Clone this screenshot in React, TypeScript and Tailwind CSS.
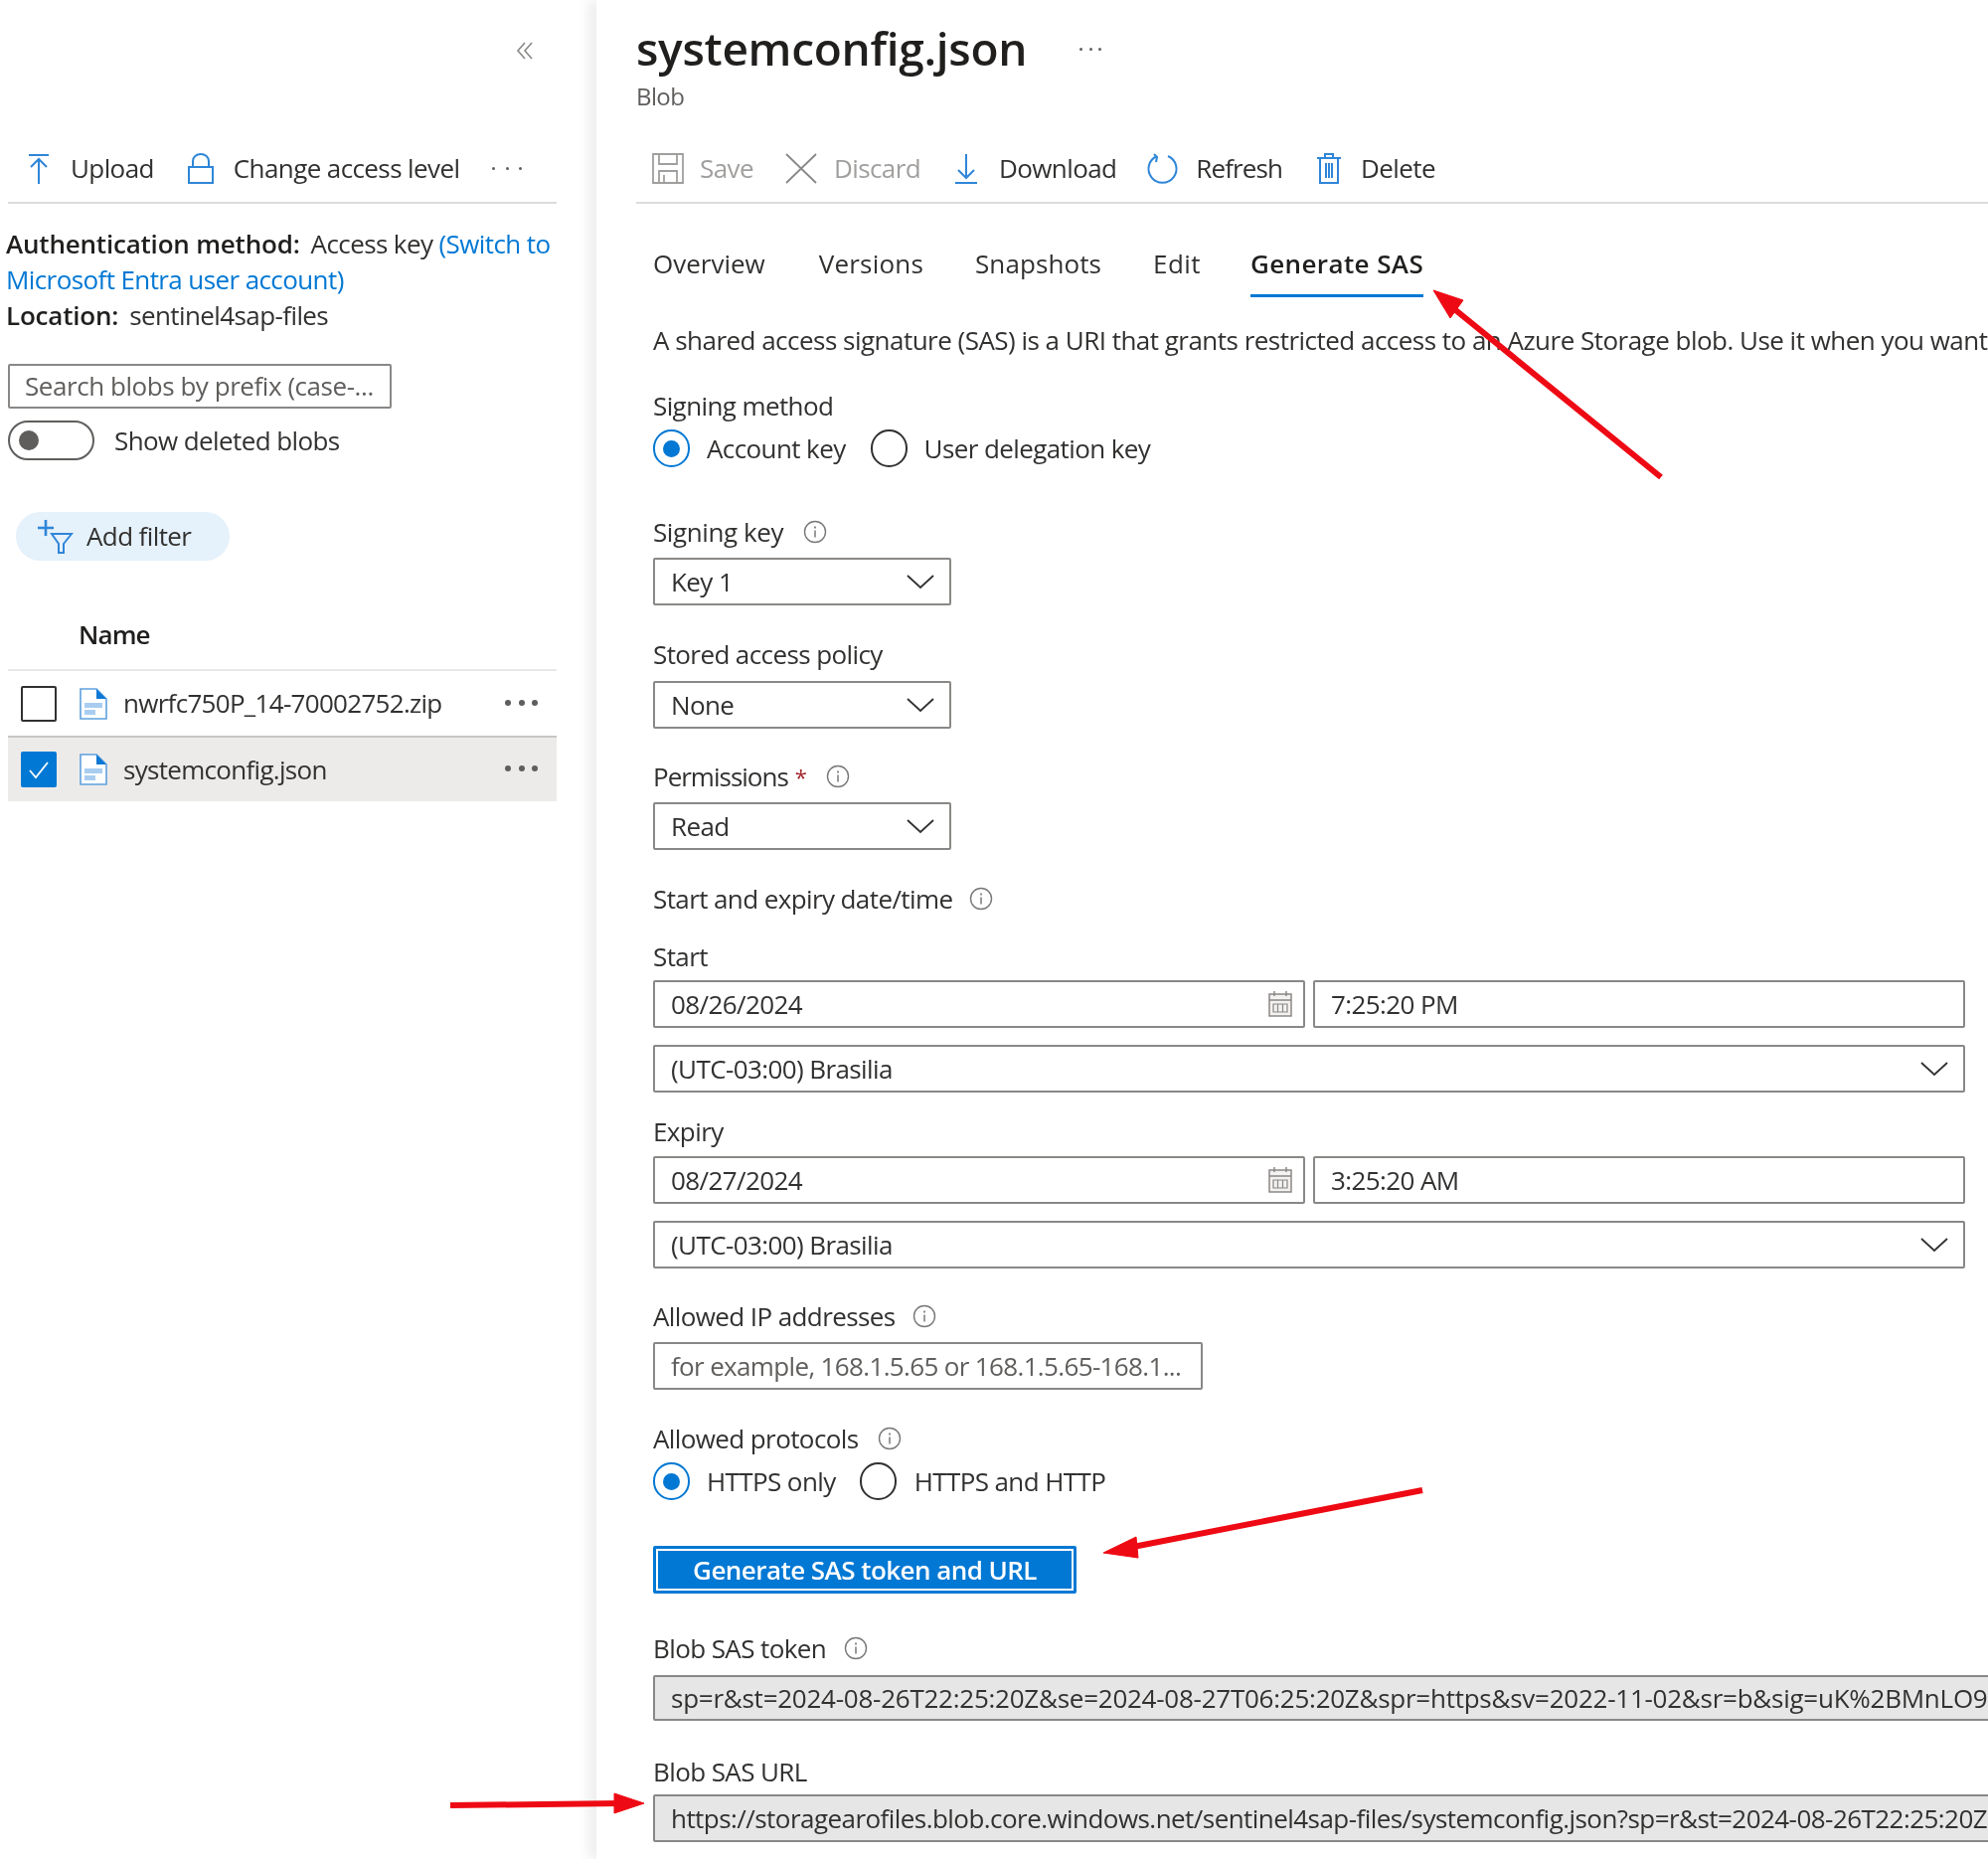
import React from "react";

const Info = ({ className = "" }: { className?: string }) => (
  <svg viewBox="0 0 24 24" className={`h-[24px] w-[24px] ${className}`} fill="none" stroke="#79777a" strokeWidth="1.4">
    <circle cx="12" cy="12" r="10.5" />
    <path d="M12 10.5v7" strokeWidth="1.5" />
    <path d="M12 6.5v2" strokeWidth="1.7" />
  </svg>
);

const Chevron = () => (
  <svg viewBox="0 0 28 16" className="h-[16px] w-[28px]" fill="none" stroke="#323130" strokeWidth="1.8">
    <path d="M1 2l13 12L27 2" />
  </svg>
);

const Radio = ({ on }: { on?: boolean }) => (
  <span className={`flex h-[38px] w-[37px] shrink-0 items-center justify-center rounded-full border-2 ${on ? "border-[#0078d4]" : "border-[#323130]"}`}>
    {on ? <span className="h-[17px] w-[17px] rounded-full bg-[#0078d4]" /> : null}
  </span>
);

const Calendar = () => (
  <svg viewBox="0 0 24 26" className="h-[26px] w-[24px]" fill="none" stroke="#8a8886" strokeWidth="1.5">
    <rect x="1" y="3" width="22" height="22" fill="#f3f2f1" />
    <path d="M1 9h22M6 0v5M18 0v5" />
    <path d="M5 13h14v8H5zM9.5 13v8M14.5 13v8" strokeWidth="1.2" />
  </svg>
);

const FileIcon = () => (
  <svg viewBox="0 0 28 32" className="h-[32px] w-[28px]">
    <path d="M1 1h16l10 10v20H1z" fill="#fff" stroke="#5ea0de" strokeWidth="1.6" />
    <path d="M17 1v10h10z" fill="#0f78d4" />
    <path d="M5 15h18v5H5zM5 22h11v5H5z" fill="#a9cdf0" />
  </svg>
);

const Dots = () => (
  <span className="mb-[2px] flex w-[33px] justify-between">
    <span className="h-[6px] w-[6px] rounded-full bg-[#605e5c]" />
    <span className="h-[6px] w-[6px] rounded-full bg-[#605e5c]" />
    <span className="h-[6px] w-[6px] rounded-full bg-[#605e5c]" />
  </span>
);

const TinyDots = ({ className = "" }: { className?: string }) => (
  <span className={`flex justify-between ${className}`}>
    <span className="h-[3px] w-[3px] rounded-full bg-[#605e5c]" />
    <span className="h-[3px] w-[3px] rounded-full bg-[#605e5c]" />
    <span className="h-[3px] w-[3px] rounded-full bg-[#605e5c]" />
  </span>
);

const Select = ({ value }: { value: string }) => (
  <span className="flex h-full w-full items-center justify-between pl-[16px] pr-[15px]">
    <span>{value}</span>
    <Chevron />
  </span>
);

export default function App() {
  return (
    <div className="relative flex h-[1870px] w-[2000px] overflow-hidden bg-white font-['Open_Sans',sans-serif] text-[26px] tracking-[-0.6px] text-[#323130] blur-[0.5px]">
      <aside className="w-[600px] shrink-0 pl-[8px] pr-[40px]">
        <div className="flex h-[102px] items-center justify-end pr-[23px]">
          <svg viewBox="0 0 18 20" className="h-[20px] w-[18px]" fill="none" stroke="#8a8886" strokeWidth="1.6">
            <path d="M9 2L2 10l7 8M16 2l-7 8 7 8" />
          </svg>
        </div>
        <div className="flex h-[103px] items-center border-b-2 border-[#dddcda] pt-[34px]">
          <svg viewBox="0 0 22 31" className="ml-[20px] h-[31px] w-[22px]" fill="none" stroke="#2f86d8" strokeWidth="2">
            <path d="M1 2h20M11 31V7M3 14l8-8 8 8" />
          </svg>
          <span className="ml-[21px]">Upload</span>
          <svg viewBox="0 0 26 31" className="ml-[34px] h-[31px] w-[26px]" fill="none" stroke="#2f86d8" strokeWidth="2">
            <rect x="1" y="14" width="24" height="16" />
            <path d="M5 14V8a8 7 0 0 1 16 0v6" />
          </svg>
          <span className="ml-[20px]">Change access level</span>
          <TinyDots className="ml-[33px] w-[30px]" />
        </div>
        <div className="-ml-[2px] mt-[22px] w-[560px] leading-[36px]">
          <div className="whitespace-nowrap">
            <span className="font-semibold tracking-[-0.2px] text-[#201f1e]">Authentication method:</span>
            <span className="ml-[11px]">Access key </span>
            <span className="text-[#0078d4]">(Switch to</span>
          </div>
          <div className="text-[#0078d4]">Microsoft Entra user account)</div>
          <div>
            <span className="font-semibold tracking-[-0.2px] text-[#201f1e]">Location:</span>
            <span className="ml-[11px]">sentinel4sap-files</span>
          </div>
        </div>
        <div className="mt-[31px] flex h-[45px] w-[386px] items-center rounded-[2px] border-2 border-[#8a8886] pl-[15px] tracking-[-0.45px] text-[#605e5c]">
          Search blobs by prefix (case-...
        </div>
        <div className="mt-[12px] flex h-[40px] items-center">
          <span className="flex h-[40px] w-[87px] items-center rounded-full border-2 border-[#605e5c] pl-[9px]">
            <span className="h-[20px] w-[20px] rounded-full bg-[#605e5c]" />
          </span>
          <span className="ml-[20px]">Show deleted blobs</span>
        </div>
        <div className="ml-[8px] mt-[52px] flex h-[49px] w-[215px] items-center rounded-full bg-[#e5f1fb]">
          <svg viewBox="0 0 36 34" className="ml-[22px] h-[34px] w-[36px]" fill="none" stroke="#2f86d8" strokeWidth="2">
            <path d="M0 8h16M8 0v16" strokeWidth="2.6" />
            <path d="M14 14h20l-8 10v9h-5v-9z" />
          </svg>
          <span className="ml-[13px]">Add filter</span>
        </div>
        <div className="flex h-[111px] items-end border-b-2 border-[#e8e7e6] pb-[15px] pl-[71px] font-semibold tracking-[-0.9px] text-[#201f1e]">
          Name
        </div>
        <div className="flex h-[65px] items-center">
          <span className="ml-[13px] h-[36px] w-[36px] rounded-[2px] border-2 border-[#323130]" />
          <span className="ml-[23px]"><FileIcon /></span>
          <span className="ml-[16px] tracking-[-0.7px]">nwrfc750P_14-70002752.zip</span>
          <span className="ml-auto mr-[19px]"><Dots /></span>
        </div>
        <div className="flex h-[66px] items-center border-t-2 border-[#c8c6c4] bg-[#edebe9]">
          <span className="ml-[13px] flex h-[36px] w-[36px] items-center justify-center rounded-[2px] bg-[#0078d4]">
            <svg viewBox="0 0 22 20" className="h-[20px] w-[22px]" fill="none" stroke="#fff" strokeWidth="1.8">
              <path d="M2 11l6 7L20 3" />
            </svg>
          </span>
          <span className="ml-[23px]"><FileIcon /></span>
          <span className="ml-[16px] tracking-[-0.7px]">systemconfig.json</span>
          <span className="ml-auto mr-[19px]"><Dots /></span>
        </div>
      </aside>

      <main className="min-w-0 flex-1 overflow-hidden pl-[40px] shadow-[-8px_0_12px_rgba(0,0,0,0.07)]">
        <div className="mt-[11px] flex h-[74px] items-center">
          <h1 className="text-[46px] font-semibold tracking-[-0.3px] text-[#201f1e]">systemconfig.json</h1>
          <TinyDots className="ml-[53px] mt-[3px] w-[22px]" />
        </div>
        <div className="h-[24px] text-[24px] leading-[24px] text-[#605e5c]">Blob</div>
        <div className="flex h-[96px] items-center border-b-2 border-[#dddcda] pl-[16px] pt-[27px]">
          <svg viewBox="0 0 32 31" className="h-[31px] w-[32px]" fill="none" stroke="#a19f9d" strokeWidth="1.8">
            <path d="M1 1h30v29H1z" />
            <path d="M7 1v10h18V1M7 30V18h18v12M12 22v8" />
          </svg>
          <span className="ml-[16px] text-[#a19f9d]">Save</span>
          <svg viewBox="0 0 32 31" className="ml-[32px] h-[31px] w-[32px]" fill="none" stroke="#8a8886" strokeWidth="1.8">
            <path d="M1 1l30 29M31 1L1 30" />
          </svg>
          <span className="ml-[17px] text-[#a19f9d]">Discard</span>
          <svg viewBox="0 0 22 31" className="ml-[35px] h-[31px] w-[22px]" fill="none" stroke="#2f86d8" strokeWidth="2">
            <path d="M11 1v24M3 17l8 8 8-8M0 30h22" />
          </svg>
          <span className="ml-[22px]">Download</span>
          <svg viewBox="0 0 33 31" className="ml-[30px] h-[31px] w-[33px]" fill="none" stroke="#2f86d8" strokeWidth="2">
            <path d="M22 3a14 14 0 1 1-11 0M8 1l3 3-1 5" />
          </svg>
          <span className="ml-[17px] tracking-[-0.9px]">Refresh</span>
          <svg viewBox="0 0 26 31" className="ml-[34px] h-[31px] w-[26px]" fill="none" stroke="#2f86d8" strokeWidth="2">
            <path d="M1 5h24M9 5V1h8v4M4 5v25h18V5M10 10v15M13 10v15M16 10v15" />
          </svg>
          <span className="ml-[19px]">Delete</span>
        </div>

        <div className="pl-[17px] pr-[23px]">
          <div className="flex gap-[52px] pt-[42px]">
            <span className="h-[52px] leading-[36px] tracking-[0px]">Overview</span>
            <span className="ml-[2px] h-[52px] leading-[36px] tracking-[0.2px]">Versions</span>
            <span className="h-[52px] leading-[36px] tracking-[0.1px]">Snapshots</span>
            <span className="h-[52px] leading-[36px] tracking-[0.4px]">Edit</span>
            <span className="-ml-[2px] h-[52px] border-b-[3px] border-[#0078d4] font-semibold leading-[36px] tracking-[0.4px] text-[#201f1e]">Generate SAS</span>
          </div>
          <div className="mt-[25px] whitespace-nowrap leading-[36px] tracking-[-0.52px]">
            A shared access signature (SAS) is a URI that grants restricted access to an Azure Storage blob. Use it when you want
          </div>

          <div className="mt-[30px] leading-[36px]">Signing method</div>
          <div className="mt-[5px] flex h-[40px] items-center">
            <Radio on />
            <span className="ml-[17px]">Account key</span>
            <span className="ml-[25px]"><Radio /></span>
            <span className="ml-[17px]">User delegation key</span>
          </div>

          <div className="mt-[46px] flex items-center leading-[36px] tracking-[-0.4px]">Signing key<Info className="ml-[20px]" /></div>
          <div className="mt-[8px] h-[48px] w-[300px] rounded-[2px] border-2 border-[#8a8886]"><Select value="Key 1" /></div>

          <div className="mt-[31px] leading-[36px]">Stored access policy</div>
          <div className="mt-[9px] h-[48px] w-[300px] rounded-[2px] border-2 border-[#8a8886]"><Select value="None" /></div>

          <div className="mt-[30px] flex items-center leading-[36px]">
            <span className="tracking-[-1px]">Permissions</span>
            <span className="ml-[7px] text-[22px] text-[#a4262c]">*</span>
            <Info className="ml-[20px]" />
          </div>
          <div className="mt-[8px] h-[48px] w-[300px] rounded-[2px] border-2 border-[#8a8886]"><Select value="Read" /></div>

          <div className="mt-[31px] flex items-center leading-[36px]">Start and expiry date/time<Info className="ml-[17px]" /></div>

          <div className="mt-[22px] leading-[36px]">Start</div>
          <div className="mt-[6px] flex h-[48px] gap-[8px]">
            <div className="flex w-[656px] shrink-0 items-center justify-between rounded-[2px] border-2 border-[#8a8886] pl-[16px] pr-[11px]">08/26/2024<Calendar /></div>
            <div className="flex flex-1 items-center rounded-[2px] border-2 border-[#8a8886] pl-[16px]">7:25:20 PM</div>
          </div>
          <div className="mt-[17px] h-[48px] rounded-[2px] border-2 border-[#8a8886]"><Select value="(UTC-03:00) Brasilia" /></div>

          <div className="mt-[21px] leading-[36px]">Expiry</div>
          <div className="mt-[7px] flex h-[48px] gap-[8px]">
            <div className="flex w-[656px] shrink-0 items-center justify-between rounded-[2px] border-2 border-[#8a8886] pl-[16px] pr-[11px]">08/27/2024<Calendar /></div>
            <div className="flex flex-1 items-center rounded-[2px] border-2 border-[#8a8886] pl-[16px]">3:25:20 AM</div>
          </div>
          <div className="mt-[17px] h-[48px] rounded-[2px] border-2 border-[#8a8886]"><Select value="(UTC-03:00) Brasilia" /></div>

          <div className="mt-[30px] flex items-center leading-[36px]">Allowed IP addresses<Info className="ml-[17px]" /></div>
          <div className="mt-[8px] flex h-[48px] w-[553px] items-center rounded-[2px] border-2 border-[#8a8886] pl-[16px] tracking-[-0.65px] text-[#605e5c]">
            for example, 168.1.5.65 or 168.1.5.65-168.1...
          </div>

          <div className="mt-[31px] flex items-center leading-[36px]">Allowed protocols<Info className="ml-[19px]" /></div>
          <div className="mt-[5px] flex h-[40px] items-center">
            <Radio on />
            <span className="ml-[17px]">HTTPS only</span>
            <span className="ml-[24px]"><Radio /></span>
            <span className="ml-[18px]">HTTPS and HTTP</span>
          </div>

          <div className="mt-[45px] flex h-[48px] w-[426px] items-center justify-center rounded-[2px] border-[3px] border-[#0078d4] bg-[#0078d4] font-semibold tracking-[-0.55px] text-white outline-2 -outline-offset-[5px] outline-white">
            Generate SAS token and URL
          </div>

          <div className="mt-[37px] flex items-center leading-[36px]">Blob SAS token<Info className="ml-[18px]" /></div>
          <div className="mt-[9px] flex h-[46px] w-[1400px] items-center whitespace-nowrap rounded-[2px] border-2 border-[#8a8886] bg-[#e6e6e6] pl-[16px] tracking-[-0.25px]">
            sp=r&amp;st=2024-08-26T22:25:20Z&amp;se=2024-08-27T06:25:20Z&amp;spr=https&amp;sv=2022-11-02&amp;sr=b&amp;sig=uK%2BMnLO9
          </div>

          <div className="mt-[33px] leading-[36px]">Blob SAS URL</div>
          <div className="mt-[5px] flex h-[48px] w-[1400px] items-center whitespace-nowrap rounded-[2px] border-2 border-[#8a8886] bg-[#e6e6e6] pl-[16px] tracking-[-0.55px]">
            https://storagearofiles.blob.core.windows.net/sentinel4sap-files/systemconfig.json?sp=r&amp;st=2024-08-26T22:25:20Z
          </div>
        </div>
      </main>

      <svg viewBox="0 0 2000 1870" className="pointer-events-none absolute inset-0 h-[1870px] w-[2000px]">
        <g fill="#ee0a14" stroke="#ee0a14">
          <path d="M1671 480L1462 310" strokeWidth="6" fill="none" />
          <path d="M1442 292l30 10-13 18z" />
          <path d="M1431 1499L1140 1556" strokeWidth="6" fill="none" />
          <path d="M1110 1562l33-16 2 21z" />
          <path d="M453 1816L625 1814" strokeWidth="6" fill="none" />
          <path d="M648 1814l-30-10v20z" />
        </g>
      </svg>
    </div>
  );
}
